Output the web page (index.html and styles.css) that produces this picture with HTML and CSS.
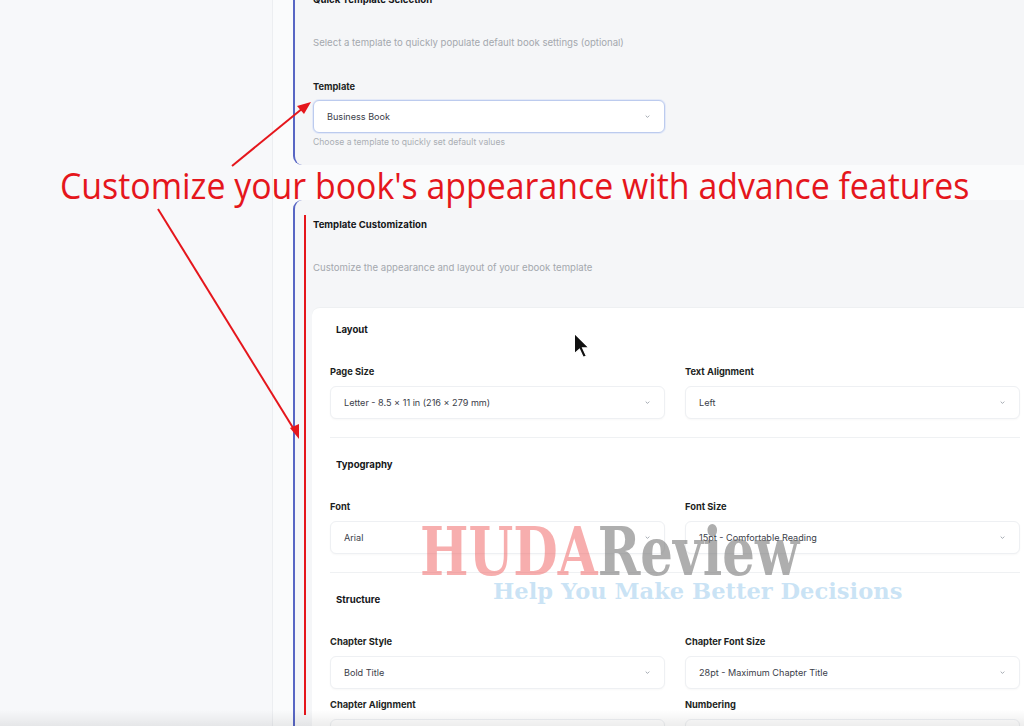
FILE: index.html
```html
<!DOCTYPE html>
<html lang="en">
<head>
    <meta charset="UTF-8">
    <meta name="viewport" content="width=device-width, initial-scale=1.0">
    <title>Ebook Settings</title>
    <link rel="stylesheet" href="styles.css">
</head>
<body>
    <div class="app">
        <aside class="sidebar"></aside>

        <main class="main">
            <section class="card card-quick">
                <h3 class="card-title">Quick Template Selection</h3>
                <p class="card-desc">Select a template to quickly populate default book settings (optional)</p>
                <label class="field-label">Template</label>
                <div class="select select-focus">
                    <span>Business Book</span>
                    <svg class="chevron" viewBox="0 0 10 10"><path d="M3 4l2 2 2-2"/></svg>
                </div>
                <p class="hint">Choose a template to quickly set default values</p>
            </section>

            <section class="card card-custom">
                <h3 class="card-title">Template Customization</h3>
                <p class="card-desc">Customize the appearance and layout of your ebook template</p>

                <div class="panel">
                    <div class="group">
                        <h4 class="group-title">Layout</h4>
                        <div class="fields">
                            <div class="field">
                                <label class="field-label">Page Size</label>
                                <div class="select">
                                    <span>Letter - 8.5 × 11 in (216 × 279 mm)</span>
                                    <svg class="chevron" viewBox="0 0 10 10"><path d="M3 4l2 2 2-2"/></svg>
                                </div>
                            </div>
                            <div class="field">
                                <label class="field-label">Text Alignment</label>
                                <div class="select">
                                    <span>Left</span>
                                    <svg class="chevron" viewBox="0 0 10 10"><path d="M3 4l2 2 2-2"/></svg>
                                </div>
                            </div>
                        </div>
                    </div>

                    <div class="group">
                        <h4 class="group-title">Typography</h4>
                        <div class="fields">
                            <div class="field">
                                <label class="field-label">Font</label>
                                <div class="select">
                                    <span>Arial</span>
                                    <svg class="chevron" viewBox="0 0 10 10"><path d="M3 4l2 2 2-2"/></svg>
                                </div>
                            </div>
                            <div class="field">
                                <label class="field-label">Font Size</label>
                                <div class="select">
                                    <span>15pt - Comfortable Reading</span>
                                    <svg class="chevron" viewBox="0 0 10 10"><path d="M3 4l2 2 2-2"/></svg>
                                </div>
                            </div>
                        </div>
                    </div>

                    <div class="group">
                        <h4 class="group-title">Structure</h4>
                        <div class="fields">
                            <div class="field">
                                <label class="field-label">Chapter Style</label>
                                <div class="select">
                                    <span>Bold Title</span>
                                    <svg class="chevron" viewBox="0 0 10 10"><path d="M3 4l2 2 2-2"/></svg>
                                </div>
                            </div>
                            <div class="field">
                                <label class="field-label">Chapter Font Size</label>
                                <div class="select">
                                    <span>28pt - Maximum Chapter Title</span>
                                    <svg class="chevron" viewBox="0 0 10 10"><path d="M3 4l2 2 2-2"/></svg>
                                </div>
                            </div>
                            <div class="field">
                                <label class="field-label">Chapter Alignment</label>
                                <div class="select">
                                    <span>Center</span>
                                    <svg class="chevron" viewBox="0 0 10 10"><path d="M3 4l2 2 2-2"/></svg>
                                </div>
                            </div>
                            <div class="field">
                                <label class="field-label">Numbering</label>
                                <div class="select">
                                    <span>Chapter 1, Chapter 2</span>
                                    <svg class="chevron" viewBox="0 0 10 10"><path d="M3 4l2 2 2-2"/></svg>
                                </div>
                            </div>
                        </div>
                    </div>
                </div>
            </section>
        </main>
    </div>

    <!-- annotation layer drawn over the screenshot -->
    <div class="caption"><span>Customize your book's appearance with advance features</span></div>

    <svg class="marks" viewBox="0 0 1024 726" width="1024" height="726">
        <line x1="232" y1="166" x2="303" y2="108" />
        <polygon points="311,102 297,106 304,114" />
        <line x1="158" y1="209" x2="295" y2="431" />
        <polygon points="299,439 290,428 299,424" />
        <line x1="305" y1="215" x2="305" y2="715" />
    </svg>

    <div class="watermark">
        <div class="wm-logo"><span class="wm-huda">HUDA</span><span class="wm-review">Review</span></div>
        <div class="wm-tag">Help You Make Better Decisions</div>
    </div>

    <svg class="cursor" viewBox="0 0 14 22" width="18" height="28">
        <path d="M1 1 L1 17 L5 13.5 L8 20 L10.5 19 L7.5 12.5 L12.5 12.5 Z" fill="#111" stroke="#fff" stroke-width="1"/>
    </svg>

    <div class="bottom-shade"></div>
</body>
</html>
```

FILE: styles.css
```css
* {
    box-sizing: border-box;
}
body {
    margin: 0;
    width: 1024px;
    height: 726px;
    overflow: hidden;
    position: relative;
    font-family: Inter, "Noto Sans", sans-serif;
    background-color: #fafbfc;
    color: #1d1f23;
}
.app {
    display: grid;
    grid-template-columns: 273px 1fr;
    height: 726px;
}
.sidebar {
    background-color: #f7f8fa;
    border-right: 1px solid #eceef1;
}
.main {
    padding-left: 20px;
    background-color: #fafbfc;
    overflow: hidden;
}
.card {
    border-left: 2px solid #5866c4;
    border-radius: 9px;
    background-color: #f5f6f8;
    padding: 18px 0 17px 18px;
    margin-right: -30px;
}
.card-quick {
    margin-top: -25px;
}
.card-custom {
    margin-top: 35px;
    padding-bottom: 0;
}
.card-title {
    margin: 0;
    font-size: 9.6px;
    line-height: 14px;
    font-weight: 700;
    color: #15171a;
}
.card-desc {
    margin: 29px 0 0;
    font-size: 9.6px;
    line-height: 14px;
    color: #a4a8ae;
}
.card-quick .card-desc {
    margin-bottom: 30px;
}
.field-label {
    display: block;
    font-size: 9.3px;
    line-height: 14px;
    font-weight: 700;
    color: #1d1f23;
    margin-bottom: 7px;
}
.card-quick .field-label {
    margin-bottom: 6px;
}
.select {
    height: 33px;
    display: flex;
    align-items: center;
    justify-content: space-between;
    padding: 0 12px 0 13px;
    background-color: #fff;
    border: 1px solid #eef0f3;
    border-radius: 6px;
    box-shadow: 0 1px 2px rgba(0, 0, 0, 0.03);
    font-size: 9.1px;
    color: #3b4049;
}
.card-quick .select {
    width: 352px;
}
.select-focus {
    border-color: #bccbee;
    box-shadow: 0 0 0 1px #e3e9f8;
}
.chevron {
    width: 9px;
    height: 9px;
    fill: none;
    stroke: #9aa0a8;
    stroke-width: 1;
}
.hint {
    margin: 3px 0 0;
    font-size: 8.6px;
    line-height: 12px;
    color: #aaaeb4;
}
.panel {
    margin: 32px 0 0 -1px;
    background-color: #fff;
    border-top: 1px solid #eef0f2;
    border-top-left-radius: 8px;
    padding-left: 18px;
}
.group {
    width: 690px;
    padding: 20px 0 18px;
    border-bottom: 1px solid #eff1f3;
}
.group:first-child {
    padding-top: 15px;
}
.group-title {
    margin: 0 0 28px 6px;
    font-size: 9.6px;
    line-height: 14px;
    font-weight: 700;
    color: #15171a;
}
.fields {
    display: grid;
    grid-template-columns: 335px 335px;
    column-gap: 20px;
    row-gap: 9px;
}

/* annotation layer */
.caption {
    position: absolute;
    left: 60px;
    top: 163px;
    font-family: "Open Sans", "Noto Sans", sans-serif;
    font-size: 37px;
    line-height: 44px;
    color: #e5161c;
    white-space: nowrap;
}
.caption span {
    display: inline-block;
    transform-origin: left center;
    transform: scaleX(0.915);
}
.marks {
    position: absolute;
    left: 0;
    top: 0;
    pointer-events: none;
}
.marks line {
    stroke: #e5161c;
    stroke-width: 2;
}
.marks polygon {
    fill: #e5161c;
}
.watermark {
    position: absolute;
    left: 420px;
    top: 516px;
    font-family: "DejaVu Serif", serif;
    font-weight: 700;
    pointer-events: none;
}
.wm-logo {
    font-size: 68px;
    line-height: 70px;
    transform-origin: left top;
    transform: scaleX(0.755);
    white-space: nowrap;
}
.wm-huda {
    color: rgba(240, 100, 100, 0.52);
}
.wm-review {
    color: rgba(120, 120, 120, 0.6);
}
.wm-tag {
    margin: -7px 0 0 73px;
    font-size: 22.6px;
    line-height: 24px;
    color: rgba(150, 200, 235, 0.5);
    white-space: nowrap;
}
.cursor {
    position: absolute;
    left: 573px;
    top: 332px;
}
.bottom-shade {
    position: absolute;
    left: 0;
    right: 0;
    bottom: 0;
    height: 16px;
    background: linear-gradient(rgba(0, 0, 0, 0), rgba(0, 0, 0, 0.07));
}
```
